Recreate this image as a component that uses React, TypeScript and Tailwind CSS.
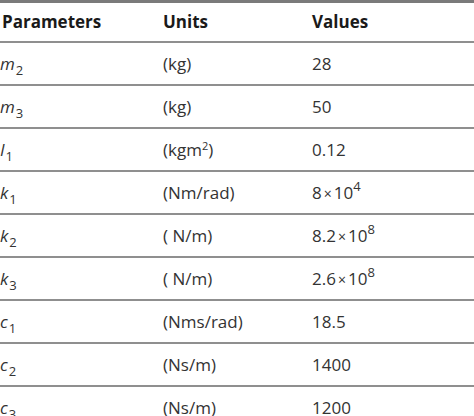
import React from 'react';

type Row = { sym: string; sub: string; unit: React.ReactNode; value: React.ReactNode };

const Times = () => <span className="mx-[2px] text-[14px]">×</span>;

const ROWS: Row[] = [
  { sym: 'm', sub: '2', unit: '(kg)', value: '28' },
  { sym: 'm', sub: '3', unit: '(kg)', value: '50' },
  { sym: 'I', sub: '1', unit: <>(kgm<sup className="text-[11px] top-[-0.55em]">2</sup>)</>, value: '0.12' },
  { sym: 'k', sub: '1', unit: '(Nm/rad)', value: <>8<Times />10<sup className="text-[13px] top-[-0.6em]">4</sup></> },
  { sym: 'k', sub: '2', unit: '( N/m)', value: <>8.2<Times />10<sup className="text-[13px] top-[-0.6em]">8</sup></> },
  { sym: 'k', sub: '3', unit: '( N/m)', value: <>2.6<Times />10<sup className="text-[13px] top-[-0.6em]">8</sup></> },
  { sym: 'c', sub: '1', unit: '(Nms/rad)', value: '18.5' },
  { sym: 'c', sub: '2', unit: '(Ns/m)', value: '1400' },
  { sym: 'c', sub: '3', unit: '(Ns/m)', value: '1200' },
];

export default function App() {
  return (
    <div
      className="w-[474px] h-[416px] overflow-hidden bg-white text-[17px] text-[#333333]"
      style={{ fontFamily: '"Open Sans", "Noto Sans", sans-serif' }}
    >
      <div className="border-t-[3px] border-[#7a7a7a]">
        <div className="flex h-[40px] items-center border-b-2 border-[#8f8f8f] font-bold text-[#1a1a1a]">
          <div className="w-[162px] pl-[2px]">Parameters</div>
          <div className="w-[150px] pl-[1px]">Units</div>
          <div className="flex-1">Values</div>
        </div>
        {ROWS.map((r, i) => (
          <div key={i} className="flex h-[43px] items-center border-b-2 border-[#8f8f8f]">
            <div className="w-[162px] pl-0">
              <span className="italic">{r.sym}</span>
              <sub className="text-[13px] bottom-[-0.4em] ml-[1px]">{r.sub}</sub>
            </div>
            <div className="w-[150px] pl-[1px]">{r.unit}</div>
            <div className="flex-1">{r.value}</div>
          </div>
        ))}
      </div>
    </div>
  );
}
